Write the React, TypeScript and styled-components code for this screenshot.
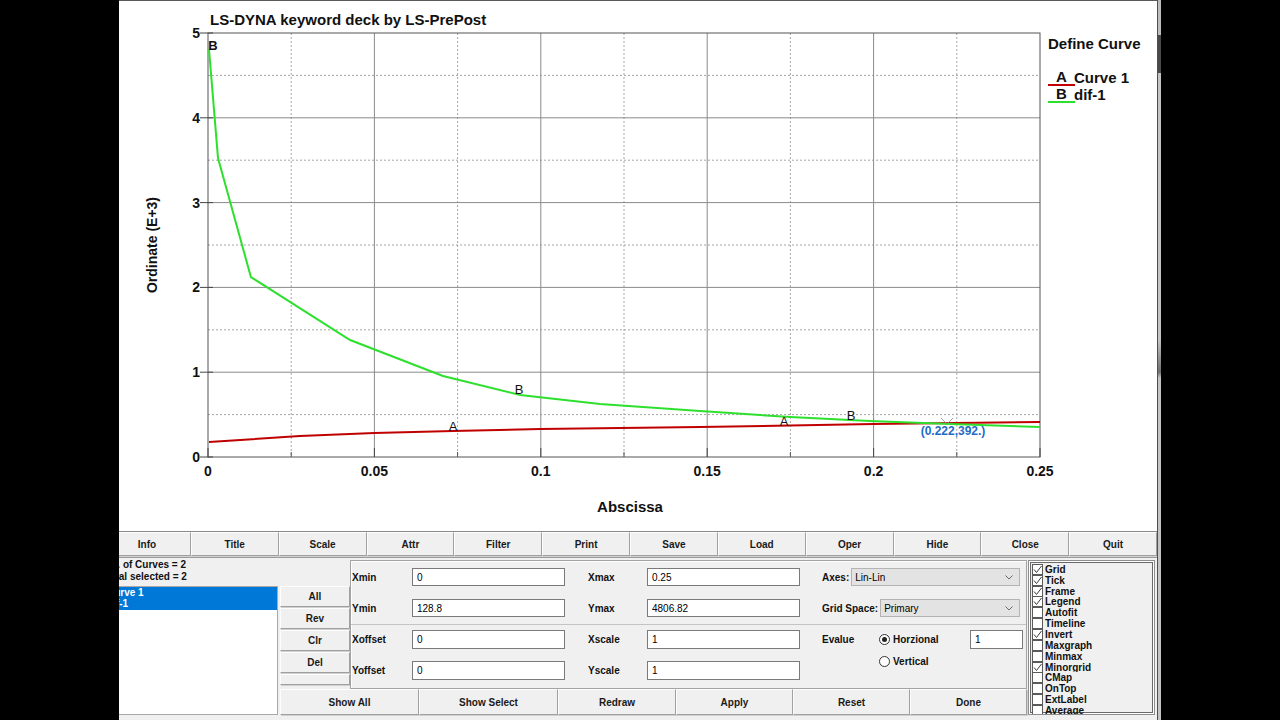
import React from 'react'
import styled, { createGlobalStyle } from 'styled-components'

const UI_FONT = `"Liberation Sans", Arial, sans-serif`

const GlobalStyle = createGlobalStyle`
  html, body {
    margin: 0;
    padding: 0;
    background: #000;
    overflow: hidden;
  }
  #root {
    width: 1280px;
    height: 720px;
  }
`

const Screen = styled.div`
  display: flex;
  width: 1280px;
  height: 720px;
  background: #000;
`

const Gutter = styled.div`
  width: 119px;
  flex: none;
`

const Window = styled.div`
  width: 1038px;
  flex: none;
  overflow: hidden;
  background: #f0f0f0;
  border-right: 1px solid #4f4f4f;
`

const ScrollEdge = styled.div`
  width: 3px;
  flex: none;
  background: linear-gradient(
    to bottom,
    #bdbdbd 0,
    #bdbdbd 35px,
    #4a4a4a 35px,
    #4a4a4a 73px,
    #c4c4c4 73px,
    #c4c4c4 340px,
    #6f6f6f 372px,
    #c4c4c4 378px,
    #c4c4c4 100%
  );
`

// the left part of the dialog is cut off by the capture
const Inner = styled.div`
  width: 1054px;
  margin-left: -16px;
  height: 720px;
  display: flex;
  flex-direction: column;
`

const PlotArea = styled.div`
  height: 530px;
  display: flex;
  background: #fff;
  border-top: 1px solid #5a5a5a;
  border-bottom: 1px solid #8a8a8a;
`

const ChartSvg = styled.svg`
  flex: none;
  display: block;
  overflow: visible;
`

const Legend = styled.div`
  flex: 1;
  padding: 34px 0 0 3px;
  font: bold 15px ${UI_FONT};
  color: #111;
`

const LegendTitle = styled.div`
  line-height: 18px;
  margin-bottom: 16px;
`

const LegendRow = styled.div`
  display: flex;
  align-items: center;
  height: 17px;
`

const Swatch = styled.span<{ $color: string }>`
  width: 27px;
  height: 14px;
  line-height: 14px;
  text-align: center;
  border-bottom: 2px solid ${(p) => p.$color};
  margin-right: -1px;
`

const Toolbar = styled.div`
  display: grid;
  grid-template-columns: repeat(12, 1fr);
  height: 24px;
  border-bottom: 2px solid #9c9c9c;
`

const PanelButton = styled.button`
  font: bold 10px ${UI_FONT};
  color: #1a1a1a;
  background: #f0f0f0;
  margin: 0;
  padding: 0;
  border: 1px solid;
  border-color: #fdfdfd #a0a0a0 #a0a0a0 #fdfdfd;
  box-shadow: 1px 1px 0 #d0d0d0;
`

const Controls = styled.div`
  display: grid;
  grid-template-columns: 175px 2px 70px 677px 1px 127px;
  grid-template-rows: 131px 26px;
`

const LeftColumn = styled.div`
  grid-column: 1;
  grid-row: 1 / 3;
  display: flex;
  flex-direction: column;
  font: bold 10px ${UI_FONT};
  color: #111;
`

const InfoText = styled.div`
  padding: 1px 0 3px 1px;
  line-height: 12px;
`

const ListBox = styled.div`
  flex: 1;
  background: #fff;
  border: 1px solid #a8a8a8;
  border-left: none;
`

const Selected = styled.div`
  background: #0078d7;
  color: #fff;
  padding-bottom: 1px;
`

const ListItem = styled.div`
  line-height: 11px;
  padding-left: 4px;
`

const SideButtons = styled.div`
  grid-column: 3;
  grid-row: 1;
  display: flex;
  flex-direction: column;
  gap: 1px;
  padding-top: 28px;
`

const SideButton = styled(PanelButton)<{ $short?: boolean }>`
  height: ${(p) => (p.$short ? 11 : 21)}px;
`

const Fields = styled.div`
  grid-column: 4;
  grid-row: 1;
  align-self: start;
  margin-top: 2px;
  border: 1px solid #a3a3a3;
  box-shadow: inset 1px 1px 0 #fff;
  font: bold 10px ${UI_FONT};
  color: #111;
`

const FieldSection = styled.div<{ $top?: boolean }>`
  display: grid;
  grid-template-columns: 61px 175px 60px 175px 201px;
  grid-auto-rows: ${(p) => (p.$top ? 18 : 19)}px;
  row-gap: ${(p) => (p.$top ? 13 : 12)}px;
  padding: ${(p) => (p.$top ? '7px 0 7px' : '5px 0 8px')};
  border-bottom: ${(p) => (p.$top ? '1px solid #c4c4c4' : 'none')};
`

const FieldLabel = styled.div<{ $col?: number; $row?: number }>`
  display: flex;
  align-items: center;
  padding-left: 1px;
  grid-column: ${(p) => p.$col ?? 'auto'};
  grid-row: ${(p) => p.$row ?? 'auto'};
`

const TextBox = styled.div<{ $w?: number; $col?: number; $row?: number }>`
  width: ${(p) => p.$w ?? 153}px;
  grid-column: ${(p) => p.$col ?? 'auto'};
  grid-row: ${(p) => p.$row ?? 'auto'};
  box-sizing: border-box;
  height: 100%;
  background: #fff;
  border: 1px solid #7a7a7a;
  padding-left: 4px;
  display: flex;
  align-items: center;
  font-weight: normal;
  font-size: 10px;
  color: #000;
`

const RightRow = styled.div`
  display: flex;
  align-items: center;
  gap: 2px;
  padding-right: 3px;
`

const RightLabel = styled.span`
  flex: none;
  white-space: nowrap;
`

const Dropdown = styled.div`
  flex: 1;
  height: 100%;
  box-sizing: border-box;
  background: #e3e3e3;
  border: 1px solid #b4b4b4;
  display: flex;
  align-items: center;
  justify-content: space-between;
  padding: 0 6px 0 3px;
  font-weight: normal;
  color: #000;
`

const EvalueBlock = styled.div`
  grid-column: 5;
  grid-row: 1 / 3;
  display: flex;
  flex-direction: column;
`

const EvalueRow = styled.div`
  display: grid;
  grid-template-columns: 57px 91px 53px;
  height: 19px;
  align-items: center;
`

const RadioRow = styled.div`
  height: 14px;
  margin: 5px 0 0 57px;
  display: flex;
  align-items: center;
`

const RadioOption = styled.label`
  display: flex;
  align-items: center;
  gap: 3px;
`

const RadioCircle = styled.span<{ $on?: boolean }>`
  width: 9px;
  height: 9px;
  border: 1px solid #333;
  border-radius: 50%;
  background: #fff;
  display: flex;
  align-items: center;
  justify-content: center;

  &::after {
    content: '';
    width: 5px;
    height: 5px;
    border-radius: 50%;
    background: ${(p) => (p.$on ? '#222' : 'transparent')};
  }
`

const BottomRow = styled.div`
  grid-column: 3 / 5;
  grid-row: 2;
  display: grid;
  grid-template-columns: 139px 139px 118px 117px 117px 117px;
`

const Checks = styled.div`
  grid-column: 6;
  grid-row: 1 / 3;
  margin-top: 2px;
  border: 1px solid #8e8e8e;
  box-shadow: inset 0 0 0 1px #fff, inset 0 0 0 2px #6a6a6a;
  padding: 3px 0 0 3px;
  font: bold 10px ${UI_FONT};
  color: #111;
  overflow: hidden;
`

const CheckRow = styled.div`
  height: 10.85px;
  display: flex;
  align-items: center;
  gap: 2px;
  overflow: hidden;
  line-height: 11px;
`

const CheckBox = styled.span`
  width: 11px;
  height: 11px;
  box-sizing: border-box;
  flex: none;
  background: #fff;
  border: 1px solid #5a5a5a;
  display: flex;
`

const X0 = 208
const X1 = 1040
const Y0 = 457
const Y1 = 33
const px = (x: number) => X0 + (x / 0.25) * (X1 - X0)
const py = (y: number) => Y0 - (y / 5) * (Y0 - Y1)

const curveA: [number, number][] = [
  [0.0003, 0.177], [0.0276, 0.248], [0.05, 0.283], [0.0736, 0.307],
  [0.1, 0.33], [0.1478, 0.354], [0.2, 0.389], [0.25, 0.413],
]

const curveB: [number, number][] = [
  [0.0003, 4.807], [0.003, 3.526], [0.0129, 2.123], [0.0427, 1.38],
  [0.0706, 0.955], [0.0938, 0.731], [0.1178, 0.625], [0.1478, 0.542],
  [0.1749, 0.472], [0.1989, 0.425], [0.223, 0.389], [0.25, 0.354],
]

const toPoints = (pts: [number, number][]) =>
  pts.map(([x, y]) => `${px(x).toFixed(1)},${py(y).toFixed(1)}`).join(' ')

const xTicks = [0, 0.05, 0.1, 0.15, 0.2, 0.25]
const yTicks = [0, 1, 2, 3, 4, 5]

const Chart: React.FC = () => (
  <ChartSvg width={942} height={530} viewBox="103 1 942 530">
    <g fontFamily={UI_FONT} fill="#111">
      <text x={210} y={25} fontSize={15} fontWeight="bold">
        LS-DYNA keyword deck by LS-PrePost
      </text>

      {/* minor grid */}
      {xTicks.slice(0, -1).map((t) => (
        <line key={`xm${t}`} x1={px(t + 0.025)} x2={px(t + 0.025)} y1={Y1} y2={Y0}
          stroke="#a5a5a5" strokeDasharray="2 2" />
      ))}
      {yTicks.slice(0, -1).map((t) => (
        <line key={`ym${t}`} x1={X0} x2={X1} y1={py(t + 0.5)} y2={py(t + 0.5)}
          stroke="#a5a5a5" strokeDasharray="2 2" />
      ))}

      {/* major grid */}
      {xTicks.slice(1, -1).map((t) => (
        <line key={`xg${t}`} x1={px(t)} x2={px(t)} y1={Y1} y2={Y0} stroke="#8a8a8a" />
      ))}
      {yTicks.slice(1, -1).map((t) => (
        <line key={`yg${t}`} x1={X0} x2={X1} y1={py(t)} y2={py(t)} stroke="#8a8a8a" />
      ))}

      <rect x={X0} y={Y1} width={X1 - X0} height={Y0 - Y1} fill="none" stroke="#555" />

      {/* ticks */}
      {yTicks.map((t) => (
        <line key={`yt${t}`} x1={X0 - 8} x2={X0 + 5} y1={py(t)} y2={py(t)} stroke="#444" />
      ))}
      {xTicks.map((t) => (
        <line key={`xt${t}`} x1={px(t)} x2={px(t)} y1={Y0 - 9} y2={Y0} stroke="#444" />
      ))}
      {xTicks.slice(0, -1).map((t) => (
        <line key={`xtm${t}`} x1={px(t + 0.025)} x2={px(t + 0.025)} y1={Y0 - 5} y2={Y0} stroke="#555" />
      ))}

      {yTicks.map((t) => (
        <text key={`yl${t}`} x={200} y={py(t) + 5} fontSize={14} fontWeight="bold" textAnchor="end">
          {t}
        </text>
      ))}
      {xTicks.map((t) => (
        <text key={`xl${t}`} x={px(t)} y={476} fontSize={14} fontWeight="bold" textAnchor="middle">
          {t}
        </text>
      ))}

      <text x={630} y={512} fontSize={15} fontWeight="bold" textAnchor="middle">
        Abscissa
      </text>
      <text x={0} y={0} fontSize={14} fontWeight="bold" textAnchor="middle"
        transform="translate(157 245) rotate(-90)">
        Ordinate (E+3)
      </text>

      <polyline points={toPoints(curveA)} fill="none" stroke="#c00000" strokeWidth={2} />
      <polyline points={toPoints(curveB)} fill="none" stroke="#2ee02e" strokeWidth={2} />

      <text x={213} y={50} fontSize={13} fontWeight="bold" textAnchor="middle">B</text>
      <text x={453} y={431} fontSize={13} textAnchor="middle">A</text>
      <text x={519} y={394} fontSize={13} textAnchor="middle">B</text>
      <text x={784} y={426} fontSize={13} textAnchor="middle">A</text>
      <text x={851} y={420} fontSize={13} textAnchor="middle">B</text>

      <polyline points="941,418 947,424 953,418" fill="none" stroke="#8a8a8a" strokeWidth={0.8} />
      <text x={953} y={435} fontSize={12} fontWeight="bold" fill="#1f6cc4" textAnchor="middle">
        (0.222,392.)
      </text>
    </g>
  </ChartSvg>
)

const Chevron: React.FC = () => (
  <svg width={8} height={5} viewBox="0 0 8 5">
    <path d="M0.5 0.5 L4 4 L7.5 0.5" fill="none" stroke="#6b6b6b" strokeWidth={1} />
  </svg>
)

const Tick: React.FC = () => (
  <svg width={9} height={9} viewBox="0 0 9 9">
    <polyline points="1,4.5 3.5,7.5 8.5,1" fill="none" stroke="#3a3a3a" strokeWidth={1} />
  </svg>
)

const toolItems = ['Info', 'Title', 'Scale', 'Attr', 'Filter', 'Print', 'Save', 'Load', 'Oper', 'Hide', 'Close', 'Quit']

const options: [string, boolean][] = [
  ['Grid', true], ['Tick', true], ['Frame', true], ['Legend', true],
  ['Autofit', false], ['Timeline', false], ['Invert', true], ['Maxgraph', false],
  ['Minmax', false], ['Minorgrid', true], ['CMap', false], ['OnTop', false],
  ['ExtLabel', false], ['Average', false],
]

const App: React.FC = () => (
  <>
    <GlobalStyle />
    <Screen>
      <Gutter />
      <Window>
        <Inner>
          <PlotArea>
            <Chart />
            <Legend>
              <LegendTitle>Define Curve</LegendTitle>
              <LegendRow>
                <Swatch $color="#c00000">A</Swatch>Curve 1
              </LegendRow>
              <LegendRow>
                <Swatch $color="#2ee02e">B</Swatch>dif-1
              </LegendRow>
            </Legend>
          </PlotArea>

          <Toolbar>
            {toolItems.map((t) => (
              <PanelButton key={t}>{t}</PanelButton>
            ))}
          </Toolbar>

          <Controls>
            <LeftColumn>
              <InfoText>
                <div>No. of Curves = 2</div>
                <div>Total selected = 2</div>
              </InfoText>
              <ListBox>
                <Selected>
                  <ListItem>Curve 1</ListItem>
                  <ListItem>dif-1</ListItem>
                </Selected>
              </ListBox>
            </LeftColumn>

            <SideButtons>
              <SideButton>All</SideButton>
              <SideButton>Rev</SideButton>
              <SideButton>Clr</SideButton>
              <SideButton>Del</SideButton>
              <SideButton $short />
            </SideButtons>

            <Fields>
              <FieldSection $top>
                <FieldLabel>Xmin</FieldLabel>
                <TextBox>0</TextBox>
                <FieldLabel>Xmax</FieldLabel>
                <TextBox>0.25</TextBox>
                <RightRow>
                  <RightLabel>Axes:</RightLabel>
                  <Dropdown>Lin-Lin<Chevron /></Dropdown>
                </RightRow>
                <FieldLabel>Ymin</FieldLabel>
                <TextBox>128.8</TextBox>
                <FieldLabel>Ymax</FieldLabel>
                <TextBox>4806.82</TextBox>
                <RightRow>
                  <RightLabel>Grid Space:</RightLabel>
                  <Dropdown>Primary<Chevron /></Dropdown>
                </RightRow>
              </FieldSection>
              <FieldSection>
                <FieldLabel $col={1} $row={1}>Xoffset</FieldLabel>
                <TextBox $col={2} $row={1}>0</TextBox>
                <FieldLabel $col={3} $row={1}>Xscale</FieldLabel>
                <TextBox $col={4} $row={1}>1</TextBox>
                <FieldLabel $col={1} $row={2}>Yoffset</FieldLabel>
                <TextBox $col={2} $row={2}>0</TextBox>
                <FieldLabel $col={3} $row={2}>Yscale</FieldLabel>
                <TextBox $col={4} $row={2}>1</TextBox>
                <EvalueBlock>
                  <EvalueRow>
                    <span>Evalue</span>
                    <RadioOption>
                      <RadioCircle $on />Horzional
                    </RadioOption>
                    <TextBox $w={53}>1</TextBox>
                  </EvalueRow>
                  <RadioRow>
                    <RadioOption>
                      <RadioCircle />Vertical
                    </RadioOption>
                  </RadioRow>
                </EvalueBlock>
              </FieldSection>
            </Fields>

            <BottomRow>
              <PanelButton>Show All</PanelButton>
              <PanelButton>Show Select</PanelButton>
              <PanelButton>Redraw</PanelButton>
              <PanelButton>Apply</PanelButton>
              <PanelButton>Reset</PanelButton>
              <PanelButton>Done</PanelButton>
            </BottomRow>

            <Checks>
              {options.map(([name, on]) => (
                <CheckRow key={name}>
                  <CheckBox>{on ? <Tick /> : null}</CheckBox>
                  {name}
                </CheckRow>
              ))}
            </Checks>
          </Controls>
        </Inner>
      </Window>
      <ScrollEdge />
    </Screen>
  </>
)

export default App
